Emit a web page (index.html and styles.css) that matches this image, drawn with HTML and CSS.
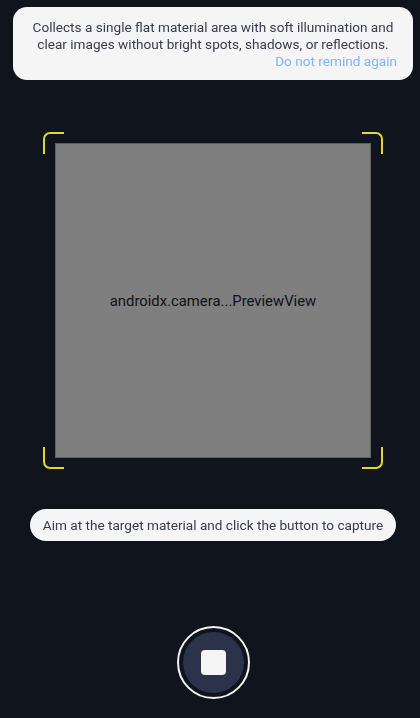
FILE: index.html
```html
<!DOCTYPE html>
<html lang="en">
<head>
<meta charset="utf-8">
<title>Capture material</title>
<link rel="stylesheet" href="styles.css">
</head>
<body>
<main class="screen">
  <section class="tip-card">
    <p class="tip-text">Collects a single flat material area with soft illumination and clear images without bright spots, shadows, or reflections.</p>
    <div class="tip-link">Do not remind again</div>
  </section>
  <section class="scan-frame">
    <span class="corner corner-tl"></span>
    <span class="corner corner-tr"></span>
    <span class="corner corner-bl"></span>
    <span class="corner corner-br"></span>
    <div class="preview">androidx.camera...PreviewView</div>
  </section>
  <div class="hint">Aim at the target material and click the button to capture</div>
  <button class="shutter" type="button" aria-label="Capture">
    <span class="shutter-inner"><span class="shutter-square"></span></span>
  </button>
</main>
</body>
</html>
```

FILE: styles.css
```css
* { box-sizing: border-box; }
html, body { margin: 0; height: 100%; }
body { background: #10141c; font-family: Roboto, "Liberation Sans", sans-serif; overflow: hidden; }
.screen { width: 420px; height: 718px; display: flex; flex-direction: column; align-items: flex-start; padding: 7px 0 0 13px; filter: blur(0.35px); }
.tip-card { width: 400px; height: 73px; background: #f5f5f6; border-radius: 14px; padding: 12px 8px 0 8px; }
.tip-text { margin: 0; font-size: 13.6px; line-height: 17px; color: #383d4b; text-align: center; }
.tip-link { margin: 0 8px 0 0; font-size: 13.6px; line-height: 16px; color: #80b4ff; text-align: right; }
.scan-frame { position: relative; width: 340px; height: 337px; margin: 52px 0 0 30px; padding: 11px 12px; }
.preview { width: 316px; height: 315px; background: #7f7f7f; display: flex; align-items: center; justify-content: center; font-size: 14.85px; color: #101216; box-shadow: 0 0 0 1px #5d5f62 inset; }
.corner { position: absolute; width: 21px; height: 22px; border: 0 solid #e6d52a; }
.corner-tl { left: 0; top: 0; border-width: 2px 0 0 2px; border-top-left-radius: 7px; }
.corner-tr { right: 0; top: 0; border-width: 2px 2px 0 0; border-top-right-radius: 7px; }
.corner-bl { left: 0; bottom: 0; border-width: 0 0 2px 2px; border-bottom-left-radius: 7px; }
.corner-br { right: 0; bottom: 0; border-width: 0 2px 2px 0; border-bottom-right-radius: 7px; }
.hint { width: 366px; height: 32px; margin: 40px 0 0 17px; background: #f5f5f6; border-radius: 16px; display: flex; align-items: center; justify-content: center; font-size: 13.6px; color: #383d4b; white-space: nowrap; }
.shutter { width: 73px; height: 73px; margin: 84.5px 0 0 163.5px; padding: 0; border: 2px solid #f2f2f2; border-radius: 50%; background: transparent; display: flex; align-items: center; justify-content: center; }
.shutter-inner { width: 61px; height: 61px; border-radius: 50%; background: #2c3249; display: flex; align-items: center; justify-content: center; }
.shutter-square { width: 25px; height: 25px; border-radius: 4px; background: #f5f5f6; }
```
